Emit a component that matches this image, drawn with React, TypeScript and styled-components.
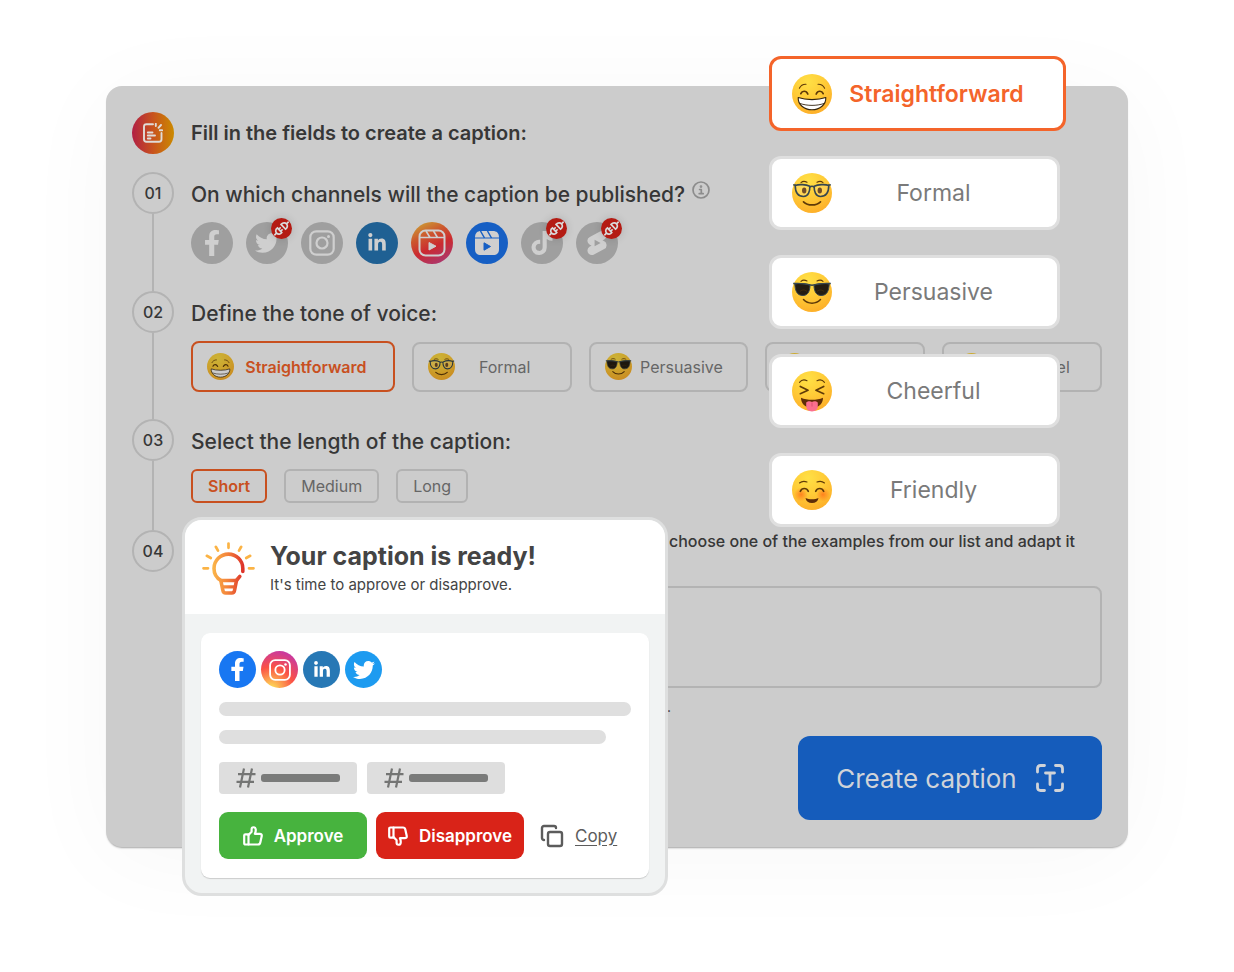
import React, { useId } from 'react';
import styled, { createGlobalStyle, css } from 'styled-components';
import { FaFacebookF, FaTwitter, FaLinkedinIn, FaTiktok } from 'react-icons/fa';
import { SiYoutubeshorts } from 'react-icons/si';
import { Copy } from 'lucide-react';

const GlobalStyle = createGlobalStyle`
  *, *::before, *::after { box-sizing: border-box; }
  body {
    margin: 0;
    background: #fff;
    color: #373737;
    font-family: Inter, 'Liberation Sans', sans-serif;
  }
  button, textarea { font: inherit; color: inherit; }
  button { padding: 0; border: 0; background: none; cursor: pointer; }
  h1, h2, p, ol, ul { margin: 0; padding: 0; }
  ol, ul { list-style: none; }
  svg { display: block; flex: none; }
`;

/* ---------- emoji ---------- */

type Mood = 'grin' | 'glasses' | 'cool' | 'tongue' | 'blush';

const Ink = styled.g`
  fill: none;
  stroke: #5f3a08;
  stroke-linecap: round;
  stroke-linejoin: round;
`;

function Emoji({ mood, size }: { mood: Mood; size: number }) {
  const id = useId();
  const face = `${id}-face`;
  const cheek = `${id}-cheek`;
  return (
    <svg width={size} height={size} viewBox="0 0 40 40" overflow="visible" aria-hidden="true">
      <defs>
        <radialGradient id={face} cx="0.4" cy="0.2" r="0.85">
          <stop offset="0" stopColor="#ffe045" />
          <stop offset="0.5" stopColor="#ffcb37" />
          <stop offset="1" stopColor="#fdad28" />
        </radialGradient>
        <radialGradient id={cheek}>
          <stop offset="0" stopColor="#ff7a1c" stopOpacity="0.9" />
          <stop offset="1" stopColor="#ff7a1c" stopOpacity="0" />
        </radialGradient>
      </defs>
      <circle cx="20" cy="20" r="20" fill={`url(#${face})`} />
      {mood === 'grin' && (
        <>
          <Ink>
            <path d="M7.4 14.2C8.6 11.6 11 10.1 14 10.2M32.6 14.2C31.4 11.6 29 10.1 26 10.2" strokeWidth="1.1" />
            <path d="M8.8 19.6C10.2 16.4 14.2 16.4 15.8 20M31.2 19.6C29.8 16.4 25.8 16.4 24.2 20" strokeWidth="1.7" />
          </Ink>
          <path d="M6.2 23.5C14 26.3 26 26.3 33.8 23.5C34.2 30.5 28 35.8 20 35.8S5.8 30.5 6.2 23.5Z" fill="#fff" stroke="#33240f" strokeWidth="1.1" strokeLinejoin="round" />
          <path d="M8 29.5C15.5 32 24.5 32 32 29.5" fill="none" stroke="#33240f" strokeWidth="0.9" />
        </>
      )}
      {mood === 'glasses' && (
        <>
          <Ink>
            <path d="M9 9.6C10.5 8.3 13 8.2 15 9.3M31 9.6C29.5 8.3 27 8.2 25 9.3" strokeWidth="1.1" />
            <path d="M11.5 28.8C16 33 24 33 28.500 28.8" strokeWidth="1.7" />
          </Ink>
          <ellipse cx="12.2" cy="17.6" rx="2.2" ry="3" fill="#5a2f05" />
          <ellipse cx="27.8" cy="17.6" rx="2.2" ry="3" fill="#5a2f05" />
          <g fill="#fff" fillOpacity="0.14" stroke="#37474f" strokeWidth="1.6" strokeLinejoin="round">
            <path d="M3.2 12.5C7 11 14 11.5 17.8 13.2C18 18 16.5 23.5 11.5 23.5C5.5 23.5 3.3 19 3.2 12.5Z" />
            <path d="M36.8 12.5C33 11 26 11.5 22.2 13.2C22 18 23.5 23.5 28.5 23.5C34.5 23.5 36.7 19 36.8 12.5Z" />
            <path d="M1.2 11.8L4 12.2M38.8 11.8L36 12.2M17.8 14.2C19 13.2 21 13.2 22.2 14.2" fill="none" />
          </g>
        </>
      )}
      {mood === 'cool' && (
        <>
          <Ink>
            <path d="M9 9.3C10.5 8 13 8 15 9M31 9.3C29.5 8 27 8 25 9" strokeWidth="1.1" />
            <path d="M11.5 27.6C16 32.4 24 32.4 28.5 27.6" strokeWidth="1.5" />
          </Ink>
          <g fill="#241d12" stroke="#37474f" strokeWidth="1" strokeLinejoin="round">
            <path d="M2.8 12C7 11 14 11.5 18 13C18 18 16.5 23.5 11 23.5C5 23.5 3.2 19 2.8 12Z" />
            <path d="M37.2 12C33 11 26 11.5 22 13C22 18 23.5 23.5 29 23.5C35 23.5 36.8 19 37.2 12Z" />
            <path d="M1.2 11.5C8 11 14 11.6 20 13.2C26 11.6 32 11 38.8 11.5" fill="none" strokeWidth="1.4" />
          </g>
          <path d="M8 19.5C10 17.500 13 17.500 15 19.5M25 19.5C27 17.500 30 17.500 32 19.5" fill="none" stroke="#4a3510" strokeWidth="0.8" />
        </>
      )}
      {mood === 'tongue' && (
        <>
          <Ink>
            <path d="M7.5 11.3C9.5 8.8 12.5 8.5 15 9.7M32.5 11.3C30.5 8.8 27.5 8.5 25 9.7" strokeWidth="1.1" />
            <path d="M8.3 15.5L16 19.3L8.3 22.7M31.7 15.5L24 19.3L31.7 22.7" strokeWidth="1.7" />
          </Ink>
          <path d="M9 26.8C15 29.5 25 29.5 31 26.8C31 32 27.5 37 20 37S9 32 9 26.8Z" fill="#5f2d08" />
          <path d="M14.2 31.5C16 29.8 18.6 30 20 31C21.4 30 24 29.8 25.8 31.5V35C25.8 38.5 23.5 40.4 20 40.4S14.2 38.5 14.2 35Z" fill="#fb6f8f" />
          <path d="M20 31.5V35.5" stroke="#d94c72" strokeWidth="0.9" />
        </>
      )}
      {mood === 'blush' && (
        <>
          <circle cx="9" cy="24.5" r="7" fill={`url(#${cheek})`} />
          <circle cx="31" cy="24.5" r="7" fill={`url(#${cheek})`} />
          <Ink>
            <path d="M7.5 13C9.5 11.3 12.5 11 15 12M32.5 13C30.5 11.3 27.5 11 25 12" strokeWidth="1.1" />
            <path d="M8.3 21.3C10 17.6 14.6 17.6 16.3 21.3M31.7 21.3C30 17.6 25.4 17.6 23.7 21.3" strokeWidth="1.6" />
          </Ink>
          <path d="M13.5 28C17 29.8 23 29.8 26.5 28C26 31.3 23.5 33 20 33S14 31.3 13.5 28Z" fill="#5f2d08" />
        </>
      )}
    </svg>
  );
}

/* ---------- icons ---------- */

const InstagramIcon = ({ size }: { size: number }) => (
  <svg width={size} height={size} viewBox="0 0 26 26" fill="none" stroke="currentColor" strokeWidth="2.2">
    <rect x="1.3" y="1.3" width="23.4" height="23.4" rx="6" />
    <circle cx="13" cy="13" r="5.5" />
    <circle cx="19.5" cy="6.5" r="1.5" fill="currentColor" stroke="none" />
  </svg>
);

const ReelsIcon = () => (
  <svg width="28" height="28" viewBox="0 0 28 28" fill="none" stroke="currentColor" strokeWidth="2" strokeLinejoin="round">
    <rect x="1.5" y="1.5" width="25" height="25" rx="6" />
    <path d="M2 8.5H26M8 2L12 8.5M15.5 2L19.5 8.5" strokeWidth="1.6" />
    <path d="M11 13.5L18 17.2L11 21Z" fill="currentColor" strokeWidth="1" />
  </svg>
);

const ClipsIcon = () => (
  <svg width="26" height="26" viewBox="0 0 26 26">
    <path d="M1 7.5C1 3 3.5 1 7 1H19C22.5 1 25 3 25 7.5Z" fill="currentColor" />
    <path d="M1 8.600V19C1 23 3 25 7 25H19C23 25 25 23 25 19V8.600Z" fill="currentColor" />
    <path d="M6.5 1L10.5 8M13.5 1L17.5 8" stroke="#165fc4" strokeWidth="1.5" />
    <path d="M10 12.8L16.5 16.5L10 20.2Z" fill="#165fc4" stroke="#165fc4" strokeWidth="1" strokeLinejoin="round" />
  </svg>
);

const UnplugIcon = () => (
  <svg width="19" height="19" viewBox="0 0 19 19" fill="none" stroke="currentColor" strokeWidth="1.7" strokeLinecap="round">
    <g transform="rotate(-43 9.5 9.5)">
      <path d="M0.3 9.5H2.6M6.9 6.3A3.3 3.3 0 1 0 6.9 12.7ZM7.2 8.1H9M7.2 10.9H9" />
      <path d="M18.7 9.5H16.4M12 6.2C17.8 5.8 17.8 13.2 12 12.8Z" />
    </g>
  </svg>
);

const InfoIcon = () => (
  <svg width="18" height="18" viewBox="0 0 18 18" fill="none" stroke="#8c8c8c" strokeWidth="1.7" strokeLinecap="round" strokeLinejoin="round">
    <circle cx="9" cy="9" r="8" />
    <path d="M7.6 8.5H9.3V12.5M7.2 12.7H11.2" />
    <circle cx="9" cy="5.6" r="0.5" fill="#8c8c8c" />
  </svg>
);

const NoteIcon = () => (
  <svg width="20" height="20" viewBox="0 0 20 20" fill="none" stroke="currentColor" strokeWidth="1.9" strokeLinecap="round">
    <path d="M10 1.2H3.5C1.8 1.2 1 2 1 3.7V16.3C1 18 1.8 18.8 3.5 18.8H16C17.7 18.8 18.5 18 18.5 16.3V10" />
    <path d="M4.8 9.5H9.5M4.8 12.5H12M4.8 15.5H7.5" />
    <path d="M12.8 3V0.8M15.5 4.8L18 2M16.8 7.3H19.2" />
  </svg>
);

const ScanTextIcon = () => (
  <svg width="28" height="28" viewBox="0 0 28 28" fill="none" stroke="currentColor" strokeWidth="2.8" strokeLinecap="round">
    <path d="M1.5 8V4.5C1.5 2.5 2.5 1.5 4.5 1.5H8.5M19.5 1.5H23.5C25.5 1.5 26.5 2.5 26.5 4.5V8M26.5 20V23.5C26.5 25.5 25.5 26.5 23.5 26.5H19.5M8.5 26.5H4.5C2.5 26.5 1.5 25.5 1.5 23.5V20" />
    <path d="M9.5 9H18.5M14 9V20.5" />
  </svg>
);

const ThumbIcon = ({ down = false }: { down?: boolean }) => (
  <svg width="20" height="20" viewBox="0 0 20 20" fill="none" stroke="currentColor" strokeWidth="2.2" strokeLinejoin="round" strokeLinecap="round">
    <g transform={down ? 'matrix(1 0 0 -1 0 20)' : undefined}>
      <path d="M1.2 9.5C1.2 8.7 1.6 8.3 2.4 8.3H5.5V18.5H2.4C1.6 18.5 1.2 18.1 1.2 17.3Z" />
      <path d="M5.5 9L8.6 5.8V3.2C8.6 0.7 12.3 0.5 12.7 3.2C12.9 4.8 12.5 6.5 11.9 7.8H16.8C18.3 7.8 19 8.9 18.7 10.2L17.3 16.5C17 17.9 16.2 18.5 15 18.5H5.5" />
    </g>
  </svg>
);

const HashIcon = () => (
  <svg width="20" height="20" viewBox="0 0 20 20" fill="none" stroke="#747574" strokeWidth="2.200">
    <path d="M8 0.5L4 19.5M16 0.5L12 19.5M2 6.2H19.5M0.5 13.8H18" />
  </svg>
);

const BulbIcon = () => (
  <svg width="53" height="53" viewBox="0 0 53 53" fill="none" strokeLinecap="round" strokeLinejoin="round">
    <defs>
      <linearGradient id="bulb" gradientUnits="userSpaceOnUse" x1="10" y1="26" x2="42" y2="26">
        <stop offset="0" stopColor="#fbb84a" />
        <stop offset="0.5" stopColor="#f3813a" />
        <stop offset="1" stopColor="#dc2f2a" />
      </linearGradient>
    </defs>
    <g stroke="url(#bulb)" strokeWidth="3.6">
      <path d="M19 38.5C14.5 36 12 31.5 12 26.5A14.4 14.4 0 0 1 40.8 26.5V29.5" />
      <path d="M37.8 34.3L34.8 38" />
      <path d="M18.8 38.5H34.5L32.5 48.5C32.2 50.3 31.5 51 29.8 51H23.6C21.9 51 21.2 50.3 20.9 48.5Z" />
      <path d="M21 44.8H32" strokeWidth="3.2" />
    </g>
    <path d="M1.5 26.3H6M47 26.3H51.5M26.5 1.5V5.8M13.8 4.8L16 8.6M39.2 4.8L37 8.6M4.8 13.8L8.8 16M48.2 13.8L44.2 16" stroke="#fbb345" strokeWidth="2.7" />
  </svg>
);

/* ---------- form card ---------- */

const Page = styled.main`
  padding: 86px 106px 125px;
`;

const FormCard = styled.section`
  position: relative;
  padding: 26px 26px 27px;
  border-radius: 16px;
  background: #ccc;
  box-shadow: 0 2px 2px -1px rgba(0, 0, 0, 0.35), 0 10px 100px rgba(0, 0, 0, 0.035);
`;

const FormHeader = styled.header`
  display: flex;
  align-items: center;
  gap: 17px;
  margin-bottom: 18px;
`;

const HeaderBadge = styled.span`
  display: grid;
  place-items: center;
  width: 42px;
  height: 42px;
  border-radius: 50%;
  color: #e0dcd8;
  background: linear-gradient(90deg, #b11f45, #c8531d 50%, #cb8a00);
`;

const FormTitle = styled.h1`
  font-size: 20px;
  line-height: 30px;
  font-weight: 600;
`;

const Step = styled.li`
  display: grid;
  grid-template-columns: 42px minmax(0, 1fr);
  column-gap: 17px;
`;

const Rail = styled.div`
  display: flex;
  flex-direction: column;
  align-items: center;
`;

const StepNumber = styled.span`
  display: grid;
  place-items: center;
  width: 42px;
  height: 42px;
  border: 2px solid #b3b3b3;
  border-radius: 50%;
  font-size: 16px;
  font-weight: 500;
`;

const RailLine = styled.span`
  flex: 1;
  width: 2px;
  background: #b3b3b3;
`;

const StepBody = styled.div<{ $last?: boolean }>`
  display: flex;
  flex-direction: column;
  padding: ${(p) => (p.$last ? '0' : '7px 0 27px')};
`;

const StepTitle = styled.h2`
  display: flex;
  gap: 7px;
  height: 30px;
  margin-bottom: 13px;
  font-size: 21px;
  line-height: 32px;
  font-weight: 500;

  svg { margin-top: 2px; }
`;

const Row = styled.div<{ $gap: number }>`
  display: flex;
  align-items: center;
  gap: ${(p) => p.$gap}px;
`;

const Channel = styled.button<{ $bg: string; $size?: number; $fg?: string }>`
  position: relative;
  display: grid;
  place-items: center;
  width: ${(p) => p.$size ?? 42}px;
  height: ${(p) => p.$size ?? 42}px;
  border-radius: 50%;
  background: ${(p) => p.$bg};
  color: ${(p) => p.$fg ?? '#cfcfcf'};
`;

const OffBadge = styled.span`
  position: absolute;
  top: -4px;
  right: -4px;
  display: grid;
  place-items: center;
  width: 21px;
  height: 21px;
  border-radius: 50%;
  background: #b41b13;
  color: #dadada;
  box-shadow: 0 0 8px rgba(0, 0, 0, 0.15);
`;

const ToneOption = styled.button<{ $active?: boolean }>`
  flex: 1 1 ${(p) => (p.$active ? 204 : 160)}px;
  display: flex;
  align-items: center;
  height: ${(p) => (p.$active ? 51 : 50)}px;
  padding: 0 15px 0 14px;
  border: 2px solid ${(p) => (p.$active ? '#c8501f' : '#b2b2b2')};
  border-radius: 8px;
  font-size: 16px;
  font-weight: ${(p) => (p.$active ? 600 : 400)};
  color: ${(p) => (p.$active ? '#c8501f' : '#666')};

  svg { filter: brightness(0.8); }
`;

const ToneLabel = styled.span`
  flex: 1;
  text-align: center;
`;

const LengthOption = styled.button<{ $active?: boolean }>`
  height: 34px;
  padding: 0 15px;
  border: 2px solid ${(p) => (p.$active ? '#c8501f' : '#b2b2b2')};
  border-radius: 6px;
  font-size: 16px;
  font-weight: ${(p) => (p.$active ? 600 : 400)};
  color: ${(p) => (p.$active ? '#c8501f' : '#666')};
`;

/* The popup covers the left part of the last step, so its texts start past it. */
const Prompt = styled.label`
  padding: 0 0 34px 478px;
  font-size: 16px;
  line-height: 22px;
  font-weight: 500;
`;

const CaptionInput = styled.textarea`
  width: 100%;
  height: 102px;
  padding: 12px;
  border: 2px solid #b3b3b3;
  border-radius: 8px;
  background: transparent;
  resize: none;
  outline: none;
`;

const Hint = styled.p`
  margin: 8px 0 18px;
  padding-left: 476px;
  font-size: 14px;
  line-height: 22px;
`;

const CreateButton = styled.button`
  display: flex;
  align-items: center;
  justify-content: center;
  align-self: flex-end;
  gap: 19px;
  width: 304px;
  height: 84px;
  border-radius: 12px;
  background: #155cbb;
  color: #d0d3d8;
  font-size: 26px;
  font-weight: 400;
`;

/* ---------- floating tone list ---------- */

const ToneList = styled.ul`
  position: absolute;
  top: -30px;
  right: 62px;
  width: 297px;
  display: flex;
  flex-direction: column;
  gap: 25px;
`;

const ToneCard = styled.button<{ $active?: boolean }>`
  display: flex;
  align-items: center;
  width: ${(p) => (p.$active ? '100%' : 'calc(100% - 6px)')};
  height: ${(p) => (p.$active ? 75 : 74)}px;
  padding: 0 22px 0 20px;
  border: 3px solid #dfdfdf;
  border-radius: 12px;
  background: #fff;
  color: #7a7a7a;
  font-size: 23px;
  font-weight: 400;
  ${(p) =>
    p.$active &&
    css`
      border-color: #f4642a;
      color: #f4642a;
      font-weight: 600;
    `}
`;

/* ---------- ready popup ---------- */

const Popup = styled.section`
  position: absolute;
  top: 431px;
  left: 76px;
  width: 486px;
  border: 3px solid #dedfdf;
  border-radius: 20px;
  background: #f1f3f3;
  overflow: hidden;
`;

const PopupHeader = styled.header`
  display: flex;
  align-items: center;
  gap: 15px;
  height: 94px;
  padding: 2px 17px 0;
  background: #fff;
  color: #444;
`;

const PopupTitle = styled.h2`
  font-size: 25px;
  line-height: 34px;
  font-weight: 700;
`;

const PopupText = styled.p`
  font-size: 15px;
  line-height: 24px;
`;

const Preview = styled.div`
  display: flex;
  flex-direction: column;
  margin: 19px 16px 15px;
  padding: 18px 18px 19px;
  border-radius: 9px;
  background: #fff;
  box-shadow: 0 1px 1px rgba(0, 0, 0, 0.16);
`;

const TextBar = styled.div<{ $short?: boolean }>`
  width: ${(p) => (p.$short ? '94%' : '100%')};
  height: 14px;
  margin-top: 14px;
  border-radius: 7px;
  background: #dfdfdf;
`;

const TagRow = styled.div`
  display: flex;
  gap: 10px;
  margin: 18px 0;
`;

const Tag = styled.span`
  display: flex;
  align-items: center;
  justify-content: center;
  gap: 5px;
  width: 138px;
  height: 32px;
  border-radius: 4px;
  background: #dedede;
`;

const TagBar = styled.span`
  width: 79px;
  height: 8px;
  border-radius: 3px;
  background: #7a7b7a;
`;

const ActionButton = styled.button<{ $bg: string }>`
  display: flex;
  align-items: center;
  justify-content: center;
  gap: 11px;
  width: 148px;
  height: 47px;
  border-radius: 9px;
  background: ${(p) => p.$bg};
  color: #fff;
  font-size: 17px;
  font-weight: 600;
`;

const CopyButton = styled.button`
  display: flex;
  align-items: center;
  gap: 11px;
  margin-left: 7px;
  color: #5c5c5c;
  font-size: 17px;
`;

const CopyLabel = styled.span`
  text-decoration: underline;
  text-underline-offset: 3px;
`;

const GREY = '#9f9f9f';

const channels = [
  { name: 'Facebook', bg: GREY, icon: <FaFacebookF size={26} /> },
  { name: 'Twitter', bg: GREY, icon: <FaTwitter size={24} />, off: true },
  { name: 'Instagram', bg: GREY, icon: <InstagramIcon size={26} /> },
  { name: 'LinkedIn', bg: '#1f6093', icon: <FaLinkedinIn size={20} /> },
  {
    name: 'Instagram Reels',
    bg: 'linear-gradient(155deg, #cc9a35 8%, #cc5a2e 32%, #cb2a30 58%, #a63a78 95%)',
    icon: <ReelsIcon />,
  },
  { name: 'Facebook Reels', bg: '#165fc4', icon: <ClipsIcon /> },
  { name: 'TikTok', bg: GREY, icon: <FaTiktok size={24} />, off: true },
  { name: 'YouTube Shorts', bg: GREY, icon: <SiYoutubeshorts size={24} />, off: true },
];

const formTones: { label: string; mood: Mood }[] = [
  { label: 'Straightforward', mood: 'grin' },
  { label: 'Formal', mood: 'glasses' },
  { label: 'Persuasive', mood: 'cool' },
  { label: 'Cheerful', mood: 'tongue' },
  { label: 'Amigável', mood: 'blush' },
];

const listTones: { label: string; mood: Mood }[] = [
  ...formTones.slice(0, 4),
  { label: 'Friendly', mood: 'blush' },
];

const lengths = ['Short', 'Medium', 'Long'];

const published = [
  { name: 'Facebook', bg: '#1877f2', icon: <FaFacebookF size={23} /> },
  {
    name: 'Instagram',
    bg: 'radial-gradient(circle at 28% 104%, #fdd055 8%, #fb5245 48%, #c436a8 88%)',
    icon: <InstagramIcon size={22} />,
  },
  { name: 'LinkedIn', bg: '#2778b5', icon: <FaLinkedinIn size={18} /> },
  { name: 'Twitter', bg: '#1d9bf0', icon: <FaTwitter size={22} /> },
];

export default function App() {
  return (
    <Page>
      <GlobalStyle />
      <FormCard>
        <FormHeader>
          <HeaderBadge><NoteIcon /></HeaderBadge>
          <FormTitle>Fill in the fields to create a caption:</FormTitle>
        </FormHeader>
        <ol>
          <Step>
            <Rail><StepNumber>01</StepNumber><RailLine /></Rail>
            <StepBody>
              <StepTitle>On which channels will the caption be published? <InfoIcon /></StepTitle>
              <Row $gap={13}>
                {channels.map((c) => (
                  <Channel key={c.name} type="button" aria-label={c.name} $bg={c.bg}>
                    {c.icon}
                    {c.off && <OffBadge><UnplugIcon /></OffBadge>}
                  </Channel>
                ))}
              </Row>
            </StepBody>
          </Step>
          <Step>
            <Rail><StepNumber>02</StepNumber><RailLine /></Rail>
            <StepBody>
              <StepTitle>Define the tone of voice:</StepTitle>
              <Row $gap={17}>
                {formTones.map((t, i) => (
                  <ToneOption key={t.label} type="button" $active={i === 0}>
                    <Emoji mood={t.mood} size={27} />
                    <ToneLabel>{t.label}</ToneLabel>
                  </ToneOption>
                ))}
              </Row>
            </StepBody>
          </Step>
          <Step>
            <Rail><StepNumber>03</StepNumber><RailLine /></Rail>
            <StepBody>
              <StepTitle>Select the length of the caption:</StepTitle>
              <Row $gap={17}>
                {lengths.map((l, i) => (
                  <LengthOption key={l} type="button" $active={i === 0}>{l}</LengthOption>
                ))}
              </Row>
            </StepBody>
          </Step>
          <Step>
            <Rail><StepNumber>04</StepNumber></Rail>
            <StepBody $last>
              <Prompt htmlFor="subject">choose one of the examples from our list and adapt it</Prompt>
              <CaptionInput id="subject" />
              <Hint>.</Hint>
              <CreateButton type="button">Create caption <ScanTextIcon /></CreateButton>
            </StepBody>
          </Step>
        </ol>

        <ToneList>
          {listTones.map((t, i) => (
            <li key={t.label}>
              <ToneCard type="button" $active={i === 0}>
                <Emoji mood={t.mood} size={40} />
                <ToneLabel>{t.label}</ToneLabel>
              </ToneCard>
            </li>
          ))}
        </ToneList>

        <Popup>
          <PopupHeader>
            <BulbIcon />
            <div>
              <PopupTitle>Your caption is ready!</PopupTitle>
              <PopupText>It's time to approve or disapprove.</PopupText>
            </div>
          </PopupHeader>
          <Preview>
            <Row $gap={5}>
              {published.map((c) => (
                <Channel key={c.name} type="button" aria-label={c.name} $bg={c.bg} $size={37} $fg="#fff">
                  {c.icon}
                </Channel>
              ))}
            </Row>
            <TextBar />
            <TextBar $short />
            <TagRow>
              <Tag><HashIcon /><TagBar /></Tag>
              <Tag><HashIcon /><TagBar /></Tag>
            </TagRow>
            <Row $gap={9}>
              <ActionButton type="button" $bg="#47b33e"><ThumbIcon />Approve</ActionButton>
              <ActionButton type="button" $bg="#d92318"><ThumbIcon down />Disapprove</ActionButton>
              <CopyButton type="button"><Copy size={24} strokeWidth={2.4} /><CopyLabel>Copy</CopyLabel></CopyButton>
            </Row>
          </Preview>
        </Popup>
      </FormCard>
    </Page>
  );
}
